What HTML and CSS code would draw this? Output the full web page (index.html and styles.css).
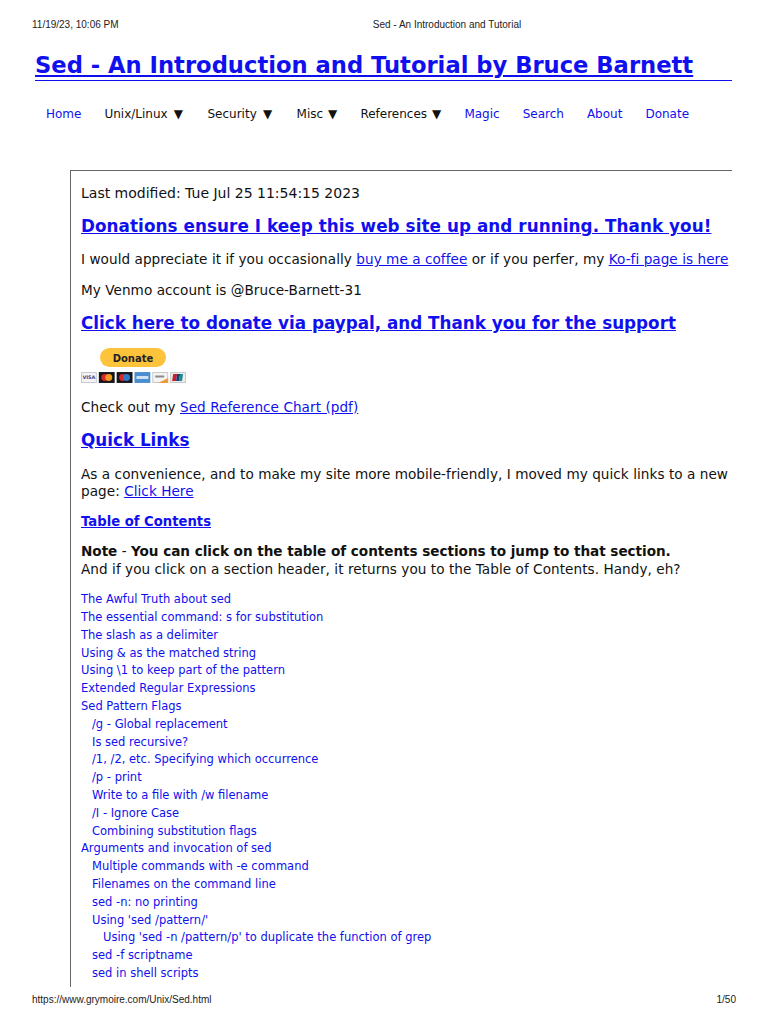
FILE: index.html
```html
<!DOCTYPE html>
<html lang="en">
<head>
<meta charset="utf-8">
<title>Sed - An Introduction and Tutorial</title>
<link rel="stylesheet" href="styles.css">
</head>
<body>
<div class="page">
  <header class="print-head">
    <span class="ph-left">11/19/23, 10:06 PM</span>
    <span class="ph-center">Sed - An Introduction and Tutorial</span>
  </header>
  <h1 class="title"><a href="#">Sed - An Introduction and Tutorial by Bruce Barnett</a></h1>
  <nav class="nav">
    <a href="#">Home</a>
    <span>Unix/Linux <i class="arrow">▼</i></span>
    <span>Security <i class="arrow">▼</i></span>
    <span>Misc <i class="arrow arrow-tight">▼</i></span>
    <span>References <i class="arrow arrow-tight">▼</i></span>
    <a href="#">Magic</a>
    <a href="#">Search</a>
    <a href="#">About</a>
    <a href="#">Donate</a>
  </nav>
  <main class="box">
    <p class="modified">Last modified: Tue Jul 25 11:54:15 2023</p>
    <h2 class="big big-first"><a href="#">Donations ensure I keep this web site up and running. Thank you!</a></h2>
    <p class="para first-para">I would appreciate it if you occasionally <a href="#">buy me a coffee</a> or if you perfer, my <a href="#">Ko-fi page is here</a></p>
    <p class="para">My Venmo account is @Bruce-Barnett-31</p>
    <h2 class="big"><a href="#">Click here to donate via paypal, and Thank you for the support</a></h2>
    <div class="donate">
      <div class="donate-btn">Donate</div>
      <svg class="cards" width="105" height="11" viewBox="0 0 106 11">
        <rect x="0.5" y="0.5" width="15" height="10" fill="#f4f4f8" stroke="#c8c8d0"/>
        <text x="8" y="7.500" text-anchor="middle" class="visa">VISA</text>
        <rect x="18" y="0" width="16" height="11" fill="#15151a"/>
        <circle cx="24" cy="5.500" r="3.500" fill="#d8262c"/><circle cx="28" cy="5.500" r="3.500" fill="#f09a1f"/>
        <rect x="36" y="0" width="16" height="11" fill="#15151a"/>
        <circle cx="42" cy="5.500" r="3.500" fill="#d8262c"/><circle cx="46" cy="5.500" r="3.500" fill="#2a7ac8"/>
        <rect x="54" y="0" width="16" height="11" fill="#4b8ed0"/>
        <rect x="56" y="4" width="12" height="3" fill="#cfe2f4"/>
        <rect x="72.500" y="0.500" width="15" height="10" fill="#f4f4f4" stroke="#c8c8c8"/>
        <path d="M78 11 L88 6 V11 Z" fill="#ef9a3c"/>
        <rect x="75" y="3.500" width="9" height="2" fill="#8a8a8a"/>
        <rect x="90.500" y="0.500" width="15" height="10" fill="#eeeeee" stroke="#c8c8c8"/>
        <path d="M93 2 H97 L96 9 H92 Z" fill="#c8202c"/><path d="M97 2 H100 L99 9 H96 Z" fill="#1b3a78"/><path d="M100 2 H103 L102 9 H99 Z" fill="#1a8a8a"/>
      </svg>
    </div>
    <p class="para chart">Check out my <a href="#">Sed Reference Chart (pdf)</a></p>
    <h2 class="big quick"><a href="#">Quick Links</a></h2>
    <p class="para wrap">As a convenience, and to make my site more mobile-friendly, I moved my quick links to a new page: <a href="#">Click Here</a></p>
    <h3 class="small-head"><a href="#">Table of Contents</a></h3>
    <p class="para note"><b>Note</b> - <b>You can click on the table of contents sections to jump to that section.</b><br>And if you click on a section header, it returns you to the Table of Contents. Handy, eh?</p>
    <ul class="toc">
      <li><a href="#">The Awful Truth about sed</a></li>
      <li><a href="#">The essential command: s for substitution</a></li>
      <li><a href="#">The slash as a delimiter</a></li>
      <li><a href="#">Using &amp; as the matched string</a></li>
      <li><a href="#">Using \1 to keep part of the pattern</a></li>
      <li><a href="#">Extended Regular Expressions</a></li>
      <li><a href="#">Sed Pattern Flags</a></li>
      <li class="l1"><a href="#">/g - Global replacement</a></li>
      <li class="l1"><a href="#">Is sed recursive?</a></li>
      <li class="l1"><a href="#">/1, /2, etc. Specifying which occurrence</a></li>
      <li class="l1"><a href="#">/p - print</a></li>
      <li class="l1"><a href="#">Write to a file with /w filename</a></li>
      <li class="l1"><a href="#">/I - Ignore Case</a></li>
      <li class="l1"><a href="#">Combining substitution flags</a></li>
      <li><a href="#">Arguments and invocation of sed</a></li>
      <li class="l1"><a href="#">Multiple commands with -e command</a></li>
      <li class="l1"><a href="#">Filenames on the command line</a></li>
      <li class="l1"><a href="#">sed -n: no printing</a></li>
      <li class="l1"><a href="#">Using 'sed /pattern/'</a></li>
      <li class="l2"><a href="#">Using 'sed -n /pattern/p' to duplicate the function of grep</a></li>
      <li class="l1"><a href="#">sed -f scriptname</a></li>
      <li class="l1"><a href="#">sed in shell scripts</a></li>
    </ul>
  </main>
  <footer class="print-foot">
    <span>https://www.grymoire.com/Unix/Sed.html</span>
    <span>1/50</span>
  </footer>
</div>
</body>
</html>
```
FILE: styles.css
```css
* { box-sizing: border-box; }
html, body { margin: 0; padding: 0; background: #fff; }
body { font-family: "DejaVu Sans", sans-serif; color: #111; }
a { color: #1010ee; }
.page { width: 768px; height: 1024px; padding: 18px 36px 0 32px; overflow: hidden; }
.print-head { position: relative; display: flex; height: 13px; font: 10px/13px "Liberation Sans", sans-serif; color: #222; }
.ph-center { position: absolute; left: 0; right: 0; padding-left: 130px; text-align: center; }
.title { margin: 19px 0 0 3px; font-size: 22.650px; line-height: 30px; font-weight: bold; height: 31px; border-bottom: 1px solid #1010ee; }
.nav { display: flex; gap: 23px; margin: 25px 0 0 14px; font-size: 12px; line-height: 17px; height: 17px; }
.nav a { text-decoration: none; }
.arrow { font-style: normal; display: inline-block; width: 12px; margin-left: 1px; text-align: center; }
.arrow-tight { width: 9.500px; }
.box { margin: 47px 0 0 38px; height: 817px; border-left: 1px solid #666; border-top: 1px solid #666; padding: 14px 0 0 10px; overflow: hidden; }
.box p, .box h2, .box h3, .box ul { margin: 0; white-space: nowrap; }
.modified { font-size: 14px; line-height: 17px; }
.para { font-size: 13.600px; line-height: 17.600px; letter-spacing: 0.05px; margin-top: 13px !important; }
.first-para { margin-top: 14px !important; }
.big { font-size: 16.800px; line-height: 21px; margin-top: 14px !important; font-weight: bold; }
.big-first { letter-spacing: 0.07px; }
.donate { margin-top: 14px; display: flex; flex-direction: column; }
.donate-btn { width: 66px; height: 19px; margin-left: 19px; border-radius: 10px; background: #fdc33b; font-size: 10px; font-weight: bold; line-height: 21px; text-align: center; color: #222; }
.cards { display: block; margin-top: 5px; }
.visa { font-family: "DejaVu Sans", sans-serif; font-size: 5px; font-weight: bold; fill: #3a4a8c; }
.chart { margin-top: 16px !important; }
.quick { margin-top: 13px !important; }
.wrap { white-space: normal !important; margin-top: 15px !important; }
.small-head { font-size: 13.200px; line-height: 16px; margin-top: 13px !important; font-weight: bold; }
.note { margin-top: 13px !important; }
.note b { letter-spacing: -0.04px; }
.toc { list-style: none; padding: 0; margin-top: 13px !important; font-size: 11.500px; line-height: 17.800px; }
.toc a { text-decoration: none; }
.toc .l1 { padding-left: 11px; }
.toc .l2 { padding-left: 22px; }
.print-foot { display: flex; justify-content: space-between; margin-top: 6px; margin-right: -4px; font: 10px/13px "Liberation Sans", sans-serif; color: #222; }
```
